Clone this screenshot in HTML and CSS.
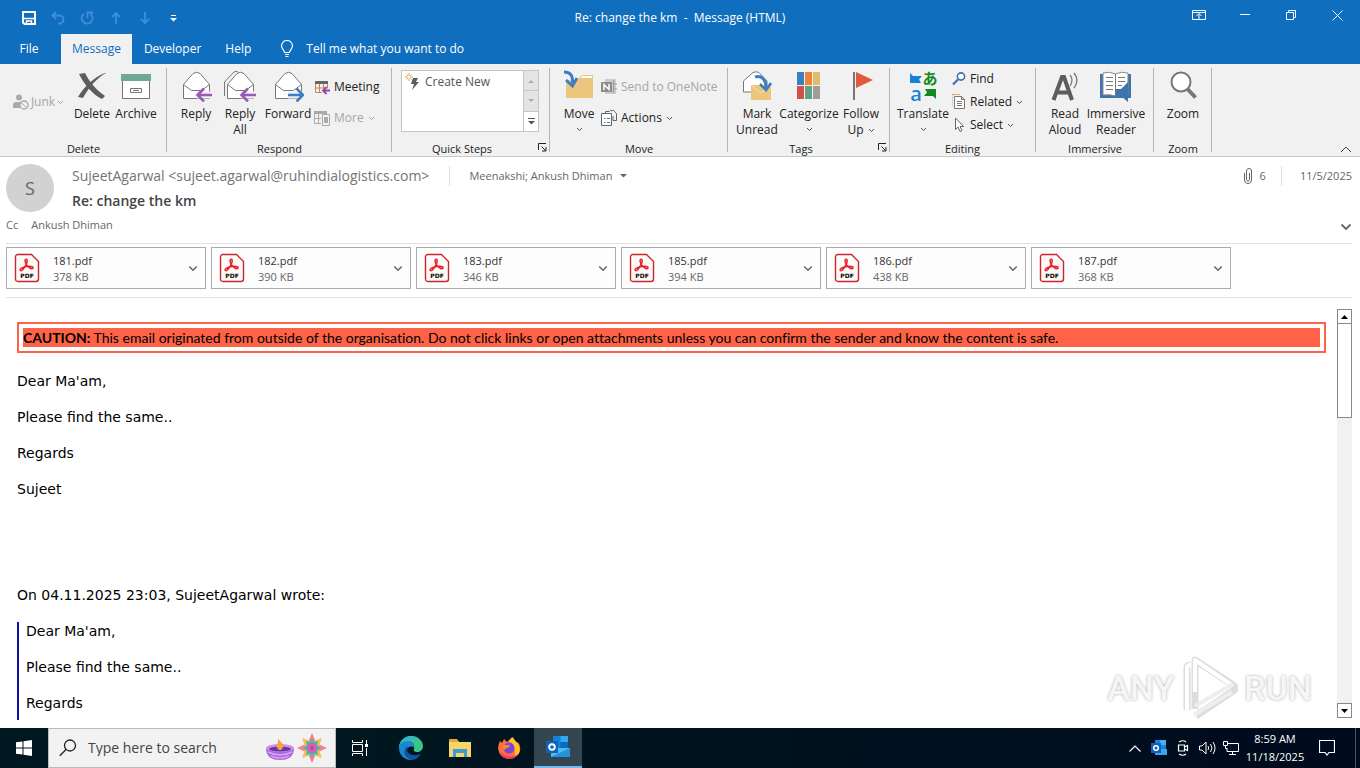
FILE: index.html
```html
<!DOCTYPE html>
<html lang="en">
<head>
    <meta charset="UTF-8">
    <meta name="viewport" content="width=device-width, initial-scale=1.0">
    <title>Re: change the km - Message (HTML)</title>
    <link rel="stylesheet" href="styles.css">
</head>
<body>

    <!-- Shared icons -->
    <svg class="sprite" aria-hidden="true">
        <symbol id="chev" viewBox="0 0 7 5"><path d="M1 1l2.500 2.500L6 1" fill="none" stroke="currentColor"/></symbol>
        <symbol id="chev-big" viewBox="0 0 12 8"><path d="M1.500 1.500L6 6l4.500-4.500" fill="none" stroke="currentColor" stroke-width="1.800"/></symbol>
        <symbol id="launcher" viewBox="0 0 9 9"><path d="M.5 7V.5H8M3.500 3.500l4 4M8 4v4H4" fill="none" stroke="currentColor"/></symbol>
        <symbol id="envelope" viewBox="0 0 32 32">
            <path d="M3.500 14.500L13 3.500q3.500-2.500 7 0l9.500 11v14h-26z" fill="#fff" stroke="#777"/>
            <path d="M3.500 14.500l8 6h10l8-6" fill="none" stroke="#777"/>
        </symbol>
        <symbol id="pdf" viewBox="0 0 26 30">
            <path d="M4 1.500h13.500l7 7V26q0 2.500-2.500 2.500H4q-2.500 0-2.500-2.500V4q0-2.500 2.500-2.500z" fill="#fffaf7" stroke="#c9252d" stroke-width="1.400"/>
            <path d="M6.500 17.500c-1.500-1 1-3 5-3.800s8-.4 7.500 1.300-4.500 0-6.500-3.200-1.800-5.500-.3-5.500 1.300 3.200-.9 6.700-4 5.300-4.800 4.500z" fill="none" stroke="#e8202a" stroke-width="1.500"/>
        </symbol>
    </svg>

    <header class="titlebar">
        <div class="quick-access">
            <button aria-label="Save"><svg width="14" height="14" viewBox="0 0 14 14"><path d="M1 1h12v12H2.500L1 11.500z" fill="none" stroke="#fff" stroke-width="2"/><path d="M1 7.500h12M4.500 13V10h5v3" fill="none" stroke="#fff" stroke-width="1.500"/></svg></button>
            <button class="off" aria-label="Undo"><svg width="14" height="14" viewBox="0 0 14 14"><path d="M5 1L1.500 4.500 5 8M2 4.500h6.500a4 4 0 0 1 0 8H7" fill="none" stroke="currentColor" stroke-width="1.800"/></svg></button>
            <button class="off" aria-label="Redo"><svg width="14" height="14" viewBox="0 0 14 14"><path d="M4 2.500a5.500 5.500 0 1 0 6.500.2M7.500 7V1.500H13" fill="none" stroke="currentColor" stroke-width="1.800"/></svg></button>
            <button class="off" aria-label="Previous item"><svg width="12" height="14" viewBox="0 0 12 14"><path d="M6 13V2M2 6l4-4 4 4" fill="none" stroke="currentColor" stroke-width="1.800"/></svg></button>
            <button class="off" aria-label="Next item"><svg width="12" height="14" viewBox="0 0 12 14"><path d="M6 1v11M2 8l4 4 4-4" fill="none" stroke="currentColor" stroke-width="1.800"/></svg></button>
            <button aria-label="Customize toolbar"><svg width="7" height="7" viewBox="0 0 7 7"><path d="M1 .5h5" stroke="#fff"/><path d="M0 3h7L3.500 6.500z" fill="#fff"/></svg></button>
        </div>
        <div class="window-title">Re: change the km &nbsp;-&nbsp; Message (HTML)</div>
        <div class="window-buttons">
            <button aria-label="Ribbon display options"><svg width="14" height="12" viewBox="0 0 14 12"><path d="M.5 1.500h13v9H.5zM.5 3.500h13M7 10V5M4.500 7L7 4.500 9.500 7" fill="none" stroke="#fff"/></svg></button>
            <button aria-label="Minimize"><svg width="10" height="10" viewBox="0 0 10 10"><path d="M0 4.500h10" stroke="#fff"/></svg></button>
            <button aria-label="Restore"><svg width="10" height="10" viewBox="0 0 10 10"><path d="M.5 2.500h7v7h-7zM2.500 2V.5h7v7H8" fill="none" stroke="#fff"/></svg></button>
            <button aria-label="Close"><svg width="11" height="11" viewBox="0 0 11 11"><path d="M.5.5l10 10M10.500.5l-10 10" stroke="#fff"/></svg></button>
        </div>
    </header>

    <nav class="tabs">
        <button class="file-tab">File</button>
        <button class="active">Message</button>
        <button>Developer</button>
        <button>Help</button>
        <label class="tell-me">
            <svg width="14" height="18" viewBox="0 0 14 18"><path d="M4.500 12.500c0-2.500-3-3.500-3-6.500a5.500 5.500 0 0 1 11 0c0 3-3 4-3 6.500zM5 14.500h4M5.500 16.500h3" fill="none" stroke="#fff" stroke-width="1.200"/></svg>
            <input type="text" placeholder="Tell me what you want to do" aria-label="Tell me what you want to do">
        </label>
    </nav>

    <section class="ribbon">
        <div class="group g-delete">
            <div class="tools">
                <button class="small off junk">
                    <svg width="16" height="16" viewBox="0 0 16 16"><circle cx="6" cy="3.500" r="3" fill="#aaa"/><path d="M0 14V11q0-3 3-3h5v6z" fill="#aaa"/><circle cx="11" cy="11" r="4" fill="#f1f1f1" stroke="#aaa" stroke-width="1.300"/><path d="M8 8.500l6 5.500" stroke="#aaa"/></svg>
                    Junk <svg class="chev"><use href="#chev"/></svg>
                </button>
                <button class="big">
                    <svg width="32" height="32" viewBox="0 0 32 32"><path d="M3 4l6-1c4 8 11 17 20 23l-3 3C16 24 8 14 3 4z" fill="#5d5d5d"/><path d="M30 3C21 8 13 17 7 28l-5-1C8 17 18 7 29 3z" fill="#5d5d5d"/></svg>
                    Delete
                </button>
                <button class="big">
                    <svg width="32" height="32" viewBox="0 0 32 32"><path d="M2.500 10h27v18.500h-27z" fill="#fff" stroke="#777"/><path d="M1 4h30v7H1z" fill="#6fa897"/><path d="M10.500 18.500h11v4h-11zM13 20.500h6" fill="none" stroke="#777"/></svg>
                    Archive
                </button>
            </div>
            <div class="group-name">Delete</div>
        </div>

        <div class="group g-respond">
            <div class="tools">
                <button class="big">
                    <svg width="32" height="32" viewBox="0 0 32 32"><use href="#envelope"/><path d="M17 25h15" stroke="#f1f1f1" stroke-width="7"/><path d="M32 25H18M24 18.500L17.500 25l6.500 6.500" fill="none" stroke="#9b59b6" stroke-width="2.600"/></svg>
                    Reply
                </button>
                <button class="big">
                    <svg width="32" height="32" viewBox="0 0 32 32"><path d="M.5 26V12L10 2q2-1.500 4 0" fill="none" stroke="#777"/><use href="#envelope"/><path d="M17 25h15" stroke="#f1f1f1" stroke-width="7"/><path d="M32 25H18M24 18.500L17.500 25l6.500 6.500" fill="none" stroke="#9b59b6" stroke-width="2.600"/></svg>
                    Reply All
                </button>
                <button class="big forward">
                    <svg width="32" height="32" viewBox="0 0 32 32"><use href="#envelope"/><path d="M16 25h16" stroke="#f1f1f1" stroke-width="7"/><path d="M16 25h14M24.500 18.500L31 25l-6.500 6.500" fill="none" stroke="#3b7ec4" stroke-width="2.600"/></svg>
                    Forward
                </button>
                <div class="stack">
                    <button class="small">
                        <svg width="16" height="16" viewBox="0 0 16 16"><path d="M1 2h13v3H1z" fill="#666"/><path d="M1.500 5v8.500H8M5.500 5v8M9.500 5v4M1.500 9h12V5" fill="none" stroke="#c98448"/><path d="M16 11.500H9.500M12.500 8L9 11.500l3.500 3.500" fill="none" stroke="#8e44ad" stroke-width="1.800"/></svg>
                        Meeting
                    </button>
                    <button class="small off">
                        <svg width="16" height="16" viewBox="0 0 16 16"><path d="M0 1h13v3H0z" fill="#aaa"/><path d="M.5 4v9.500H7M4.500 4v9M.5 8.500H7M8.500 4.500h7v11h-7z" fill="none" stroke="#aaa"/><path d="M10 7h4v6h-4z" fill="#aaa"/></svg>
                        More <svg class="chev"><use href="#chev"/></svg>
                    </button>
                </div>
            </div>
            <div class="group-name">Respond</div>
        </div>

        <div class="group g-steps">
            <div class="tools">
                <div class="gallery">
                    <button class="step">
                        <svg width="16" height="18" viewBox="0 0 16 18"><path d="M4 0v8M0 4h8M1.500 1.500l5 5M6.500 1.500l-5 5" stroke="#e0a34a"/><circle cx="4" cy="4" r="1.500" fill="#fff"/><path d="M8 5h5l-2 4h3l-7 8 2-6H6z" fill="#5d5d5d"/></svg>
                        Create New
                    </button>
                    <div class="gallery-scroll">
                        <button class="dim" aria-label="Scroll up"><svg width="6" height="4" viewBox="0 0 6 4"><path d="M0 4l3-3 3 3z" fill="#aaa"/></svg></button>
                        <button class="dim" aria-label="Scroll down"><svg width="6" height="4" viewBox="0 0 6 4"><path d="M0 0l3 3 3-3z" fill="#aaa"/></svg></button>
                        <button aria-label="More steps"><svg width="7" height="7" viewBox="0 0 7 7"><path d="M0 .5h7" stroke="#555"/><path d="M0 3h7L3.500 6.500z" fill="#555"/></svg></button>
                    </div>
                </div>
            </div>
            <div class="group-name with-launcher">Quick Steps</div>
            <button class="launcher" aria-label="Manage quick steps"><svg width="9" height="9"><use href="#launcher"/></svg></button>
        </div>

        <div class="group g-move">
            <div class="tools">
                <button class="big">
                    <svg width="32" height="32" viewBox="0 0 32 32"><path d="M3 28V10h11l5-5h11v23z" fill="#ecc67c"/><path d="M19 6h10v2H18z" fill="#fff"/><path d="M1 2c6 0 9 3 8.500 11" fill="none" stroke="#3b7ec4" stroke-width="3"/><path d="M3 10l6.500 6L14 8" fill="none" stroke="#3b7ec4" stroke-width="2.800"/></svg>
                    Move <svg class="chev"><use href="#chev"/></svg>
                </button>
                <div class="stack">
                    <button class="small off">
                        <svg width="16" height="16" viewBox="0 0 16 16"><path d="M4 0h11v15H4z" fill="#ccc"/><path d="M12.500 1v13M13 5h3M13 10h3" stroke="#999"/><path d="M0 3h11v10H0z" fill="#8c8c8c"/><path d="M3 11V5.500l5 5V5" fill="none" stroke="#fff" stroke-width="1.500"/></svg>
                        Send to OneNote
                    </button>
                    <button class="small">
                        <svg width="16" height="16" viewBox="0 0 16 16"><path d="M.5 3.500h10v12H.5z" fill="#fff" stroke="#666"/><path d="M3 8.500h1.500M6 8.500h3M3 12.500h1.500M6 12.500h3" stroke="#3b7ec4"/><path d="M4.500 3V1.500h4l1-1h3l3 3v7H12V6" fill="none" stroke="#666"/></svg>
                        Actions <svg class="chev"><use href="#chev"/></svg>
                    </button>
                </div>
            </div>
            <div class="group-name">Move</div>
        </div>

        <div class="group g-tags">
            <div class="tools">
                <button class="big">
                    <svg width="32" height="32" viewBox="0 0 32 32"><path d="M2.500 22V11L12 2.500q3-1.500 6 0L26 11v11z" fill="#fff" stroke="#777"/><path d="M10 15h20v15H10z" fill="#ecc67c"/><path d="M10 15l10 8 10-8" fill="none" stroke="#f7e3b8"/><path d="M14 7c7-2 11 3 11 11" fill="none" stroke="#3b7ec4" stroke-width="3"/><path d="M19 14l6 6 5-7" fill="none" stroke="#3b7ec4" stroke-width="2.600"/></svg>
                    Mark Unread
                </button>
                <button class="big categorize">
                    <svg width="32" height="32" viewBox="0 0 32 32"><path d="M4 2h7v13H4z" fill="#3b7ec4"/><path d="M12 2h7v13h-7z" fill="#ee8536"/><path d="M20 2h7v13h-7z" fill="#dfbd6d"/><path d="M4 16h7v13H4z" fill="#d2504a"/><path d="M12 16h7v13h-7z" fill="#5fa287"/><path d="M20 16h7v13h-7z" fill="#a09c98"/></svg>
                    Categorize <svg class="chev"><use href="#chev"/></svg>
                </button>
                <button class="big">
                    <svg width="32" height="32" viewBox="0 0 32 32"><path d="M9 2v28" stroke="#777" stroke-width="2"/><path d="M11 2l17 8-17 8z" fill="#e05a3c"/></svg>
                    Follow<span class="second-line">Up <svg class="chev"><use href="#chev"/></svg></span>
                </button>
            </div>
            <div class="group-name with-launcher">Tags</div>
            <button class="launcher" aria-label="Message options"><svg width="9" height="9"><use href="#launcher"/></svg></button>
        </div>

        <div class="group g-editing">
            <div class="tools">
                <button class="big translate">
                    <span class="translate-icon">
                        <svg width="14" height="12" viewBox="0 0 14 12"><path d="M1 1l3 3h9l-3 3.500 2 3.500H1z" fill="#1683d8"/></svg>
                        <span class="kana">あ</span>
                        <span class="latin">a</span>
                        <svg width="14" height="12" viewBox="0 0 14 12"><path d="M13 11l-3-3H1l3-3.500L2 1h11z" fill="#128a20"/></svg>
                    </span>
                    Translate <svg class="chev"><use href="#chev"/></svg>
                </button>
                <div class="stack three">
                    <button class="small">
                        <svg width="14" height="14" viewBox="0 0 14 14"><circle cx="9" cy="4.500" r="3.600" fill="#fff" stroke="#3c6fb0" stroke-width="1.600"/><path d="M6 7.500L1 12.500" stroke="#3c6fb0" stroke-width="2.200"/></svg>
                        Find
                    </button>
                    <button class="small">
                        <svg width="14" height="16" viewBox="0 0 14 16"><path d="M0 12V.5h8" fill="none" stroke="#e3a868"/><path d="M2.500 2.500h7l3 3v9h-10zM9.500 2.500v3h3M5 7.500h5M5 9.500h5M5 11.500h5" fill="#fff" stroke="#777"/></svg>
                        Related <svg class="chev"><use href="#chev"/></svg>
                    </button>
                    <button class="small">
                        <svg width="14" height="16" viewBox="0 0 14 16"><path d="M3.500 1v11.500L6 10l2 4.500 2-1L8 9.500h3.500z" fill="#fff" stroke="#666"/></svg>
                        Select <svg class="chev"><use href="#chev"/></svg>
                    </button>
                </div>
            </div>
            <div class="group-name">Editing</div>
        </div>

        <div class="group g-immersive">
            <div class="tools">
                <button class="big">
                    <svg width="32" height="32" viewBox="0 0 32 32"><path d="M4.500 30L13 7h2l8 23M8 22.500h12" fill="none" stroke="#5d5d5d" stroke-width="4"/><path d="M21 5q4 5 0 11M25 3q6 7 0 15" fill="none" stroke="#777" stroke-width="1.300"/></svg>
                    Read Aloud
                </button>
                <button class="big immersive">
                    <svg width="32" height="32" viewBox="0 0 32 32"><path d="M0 4h31v24H0z" fill="#3c74ad"/><path d="M3 3q7-2 12.500 1Q21 1 28 3v22q-7-1-12.500 1Q10 24 3 25z" fill="#fff" stroke="#8a8a8a"/><path d="M15.500 4v22M6 7.500h7M6 11.500h7M6 15.500h7M6 19.500h7M18 7.500h7M18 11.500h7M18 15.500h4" stroke="#777"/><path d="M16 19h5l7-7v20l-7-6h-5z" fill="#3c74ad"/><path d="M29 18q2.500 4 0 8" fill="none" stroke="#3c74ad" stroke-width="1.500"/></svg>
                    Immersive Reader
                </button>
            </div>
            <div class="group-name">Immersive</div>
        </div>

        <div class="group g-zoom">
            <div class="tools">
                <button class="big">
                    <svg width="32" height="32" viewBox="0 0 32 32"><circle cx="14" cy="12" r="9.500" fill="#fff" stroke="#777" stroke-width="2"/><path d="M20.500 19l8 8.500" stroke="#777" stroke-width="4"/></svg>
                    Zoom
                </button>
            </div>
            <div class="group-name">Zoom</div>
        </div>

        <button class="collapse" aria-label="Collapse the ribbon"><svg width="12" height="7" viewBox="0 0 12 7"><path d="M1 6l5-5 5 5" fill="none" stroke="#444"/></svg></button>
    </section>

    <main class="message">
        <section class="message-head">
            <div class="avatar">S</div>
            <div class="head-lines">
                <div class="from-line">
                    <span class="sender">SujeetAgarwal &lt;sujeet.agarwal@ruhindialogistics.com&gt;</span>
                    <span class="recipients">Meenakshi; Ankush Dhiman <svg width="7" height="4" viewBox="0 0 7 4"><path d="M0 0h7L3.500 3.500z" fill="#666"/></svg></span>
                    <span class="clip-count"><svg width="8" height="16" viewBox="0 0 8 16"><path d="M5.500 5v6.500a1.500 1.500 0 0 1-3 0V3a2 2 0 0 1 5 0v9a3.400 3.400 0 0 1-7 0V5" fill="none" stroke="#666"/></svg> 6</span>
                    <span class="date">11/5/2025</span>
                </div>
                <h1>Re: change the km</h1>
            </div>
        </section>
        <div class="cc-line">
            <span>Cc</span><span>Ankush Dhiman</span>
            <button aria-label="Expand header"><svg width="12" height="8"><use href="#chev-big"/></svg></button>
        </div>

        <div class="attachments">
            <div class="attachment"><div class="pdf-icon"><svg width="26" height="30"><use href="#pdf"/></svg><span>PDF</span></div><div class="file"><b>181.pdf</b><br>378 KB</div><button aria-label="181.pdf options"><svg width="10" height="7"><use href="#chev-big"/></svg></button></div>
            <div class="attachment"><div class="pdf-icon"><svg width="26" height="30"><use href="#pdf"/></svg><span>PDF</span></div><div class="file"><b>182.pdf</b><br>390 KB</div><button aria-label="182.pdf options"><svg width="10" height="7"><use href="#chev-big"/></svg></button></div>
            <div class="attachment"><div class="pdf-icon"><svg width="26" height="30"><use href="#pdf"/></svg><span>PDF</span></div><div class="file"><b>183.pdf</b><br>346 KB</div><button aria-label="183.pdf options"><svg width="10" height="7"><use href="#chev-big"/></svg></button></div>
            <div class="attachment"><div class="pdf-icon"><svg width="26" height="30"><use href="#pdf"/></svg><span>PDF</span></div><div class="file"><b>185.pdf</b><br>394 KB</div><button aria-label="185.pdf options"><svg width="10" height="7"><use href="#chev-big"/></svg></button></div>
            <div class="attachment"><div class="pdf-icon"><svg width="26" height="30"><use href="#pdf"/></svg><span>PDF</span></div><div class="file"><b>186.pdf</b><br>438 KB</div><button aria-label="186.pdf options"><svg width="10" height="7"><use href="#chev-big"/></svg></button></div>
            <div class="attachment"><div class="pdf-icon"><svg width="26" height="30"><use href="#pdf"/></svg><span>PDF</span></div><div class="file"><b>187.pdf</b><br>368 KB</div><button aria-label="187.pdf options"><svg width="10" height="7"><use href="#chev-big"/></svg></button></div>
        </div>

        <div class="reading">
            <article class="mail">
                <div class="caution"><p><strong>CAUTION:</strong> This email originated from outside of the organisation. Do not click links or open attachments unless you can confirm the sender and know the content is safe.</p></div>
                <p>Dear Ma'am,</p>
                <p>Please find the same..</p>
                <p>Regards</p>
                <p>Sujeet</p>
                <p class="wrote">On 04.11.2025 23:03, SujeetAgarwal wrote:</p>
                <blockquote>
                    <p>Dear Ma'am,</p>
                    <p>Please find the same..</p>
                    <p>Regards</p>
                </blockquote>
            </article>
            <div class="scrollbar">
                <button aria-label="Scroll message up"><svg width="7" height="4" viewBox="0 0 7 4"><path d="M0 4l3.500-4L7 4z"/></svg></button>
                <div class="thumb"></div>
                <button aria-label="Scroll message down"><svg width="7" height="4" viewBox="0 0 7 4"><path d="M0 0l3.500 4L7 0z"/></svg></button>
            </div>
        </div>

        <div class="watermark">
            <span>ANY</span>
            <svg width="58" height="64" viewBox="0 0 58 64">
                <path d="M7 54V12q0-3 3-3M15 53V4l38 25q4 3 0 6L16 60" fill="none" stroke="#ddd" stroke-width="7" stroke-linejoin="round"/>
                <path d="M7 54V12q0-3 3-3M15 36V4l38 26" fill="none" stroke="#fff" stroke-width="4" stroke-linejoin="round"/>
                <path d="M15 50l38-22M14 59l38-23" fill="none" stroke="#eee" stroke-width="4"/>
            </svg>
            <span>RUN</span>
        </div>
    </main>

    <footer class="taskbar">
        <button class="start" aria-label="Start"><svg width="16" height="16" viewBox="0 0 16 16"><path d="M0 2.300L6.500 1.400v6.100H0zM7.500 1.200L16 0v7.500H7.500zM0 8.500h6.500v6.100L0 13.700zM7.500 8.500H16V16l-8.500-1.200z" fill="#fff"/></svg></button>
        <label class="search">
            <svg width="18" height="18" viewBox="0 0 18 18"><circle cx="11" cy="6.500" r="5.500" fill="none" stroke="#222" stroke-width="1.300"/><path d="M7 10.500L.8 16.800" stroke="#222" stroke-width="1.300"/></svg>
            <input type="text" placeholder="Type here to search" aria-label="Type here to search">
            <svg width="62" height="32" viewBox="0 0 62 32">
                <path d="M1 16q14-5 28 0c0 9-6 12-14 12S1 25 1 16z" fill="#a866dd"/>
                <ellipse cx="15" cy="16" rx="14" ry="4" fill="#c993ec"/><ellipse cx="15" cy="17" rx="11" ry="2.500" fill="#6d35aa"/>
                <path d="M3 20q12 6 24 0M6 24q9 4 18 0" fill="none" stroke="#d6a6f2" stroke-width="1.500"/>
                <path d="M14 18c-5-4 0-6-1-11 5 4 7 8 3 11z" fill="#f6a53a"/>
                <g fill="#ef8290"><path id="petal" d="M47 1l5 11H42z"/><use href="#petal" transform="rotate(90 47 16)"/><use href="#petal" transform="rotate(180 47 16)"/><use href="#petal" transform="rotate(270 47 16)"/></g>
                <g fill="#f5bd58"><path id="petal2" d="M47 2l5 10H42z" transform="rotate(45 47 16)"/><path d="M47 2l5 10H42z" transform="rotate(135 47 16)"/><path d="M47 2l5 10H42z" transform="rotate(225 47 16)"/><path d="M47 2l5 10H42z" transform="rotate(315 47 16)"/></g>
                <path d="M47 7l2 3 4-1-1 4 3 3-3 3 1 4-4-1-2 3-2-3-4 1 1-4-3-3 3-3-1-4 4 1z" fill="#38b6b8"/>
                <circle cx="47" cy="16" r="5" fill="#e95aab"/><circle cx="47" cy="16" r="2" fill="#8854c0"/>
            </svg>
        </label>
        <button class="app" aria-label="Task view"><svg width="16" height="16" viewBox="0 0 16 16"><path d="M.5 0v2.500h10V0M.5 4.500h10v7H.5zM.5 16v-2.500h10V16M14.500 0v4M14.500 8v8" fill="none" stroke="#fff"/><path d="M13 4h3v3h-3z" fill="#fff"/></svg></button>
        <div class="apps">
            <button class="app" aria-label="Edge"><svg width="24" height="24" viewBox="0 0 24 24"><path d="M0 11C1 4 6 0 12 0c7 0 12 5 12 10 0 4-3 6-6 6-2 0-4-1-3-3 1-3-2-5-5-5-5 0-9 2-10 3z" fill="#3cc58a"/><path d="M0 11C1 4 6 0 12 0c3 0 6 1 8 3-5-1-12 0-14 5z" fill="#35b5c9"/><path d="M0 12c0-5 5-7 9-7 5 0 7 3 6 6-5-2-9 2-7 7 1 3 3 5 6 6C6 25 0 19 0 12z" fill="#1b86d2"/><path d="M9 10c-3 5 1 12 13 8-3 5-8 7-12 5-6-3-6-11-1-13z" fill="#12549c"/></svg></button>
            <button class="app" aria-label="File Explorer"><svg width="22" height="20" viewBox="0 0 22 20"><path d="M0 2h8l2 2h12v15H0z" fill="#f8d568"/><path d="M0 2q0-1 1-1h7l2 3H0z" fill="#e8a33a"/><path d="M4 19v-8h14v8h-3v-4H7v4z" fill="#3d9bd8"/></svg></button>
            <button class="app" aria-label="Firefox"><svg width="24" height="24" viewBox="0 0 24 24"><path d="M3 5l2 2 2-4 3 3 5-5c1 3 3 4 5 6l1-1c6 9-1 17-9 17S-2 15 3 5z" fill="#ff7139"/><path d="M12 5l4-4c1 3 3 4 5 7 4 7 0 12-4 13 3-6 0-12-5-16z" fill="#ffc62c"/><path d="M2 14c2 10 14 12 19 4-6 4-14 4-19-4z" fill="#f4316c"/><circle cx="12" cy="12" r="5.500" fill="#7b45d8"/><path d="M6 9h6c2 1 0 3-2 3-1 0-2 1-2 2-2-1-3-3-2-5z" fill="#ff8a30"/></svg></button>
            <button class="app active" aria-label="Outlook"><svg width="24" height="22" viewBox="0 0 24 22"><path d="M7 0h15v12H7z" fill="#1681d8"/><path d="M14.500 0H22v6h-7.500z" fill="#33aaf0"/><path d="M14.500 6H22v6h-7.500z" fill="#1069bd"/><path d="M5 12h19v9H5z" fill="#4dbcee"/><path d="M5 21l19-9v9z" fill="#2391dc"/><path d="M0 5h12v12H0z" fill="#0f63b8"/><circle cx="6" cy="11" r="2.800" fill="none" stroke="#fff" stroke-width="1.900"/></svg></button>
        </div>
        <div class="tray">
            <button aria-label="Show hidden icons"><svg width="12" height="7" viewBox="0 0 12 7"><path d="M.5 6.500L6 1l5.500 5.500" fill="none" stroke="#fff" stroke-width="1.200"/></svg></button>
            <button aria-label="Outlook notifications"><svg width="16" height="16" viewBox="0 0 16 16"><path d="M4 0h11v9H4z" fill="#1b84d8"/><path d="M9 0h6v5H9z" fill="#43b3f3"/><path d="M4 9h12v6H4z" fill="#38a6e6"/><path d="M0 3h10v10H0z" fill="#0c62b8"/><circle cx="5" cy="8" r="2.300" fill="none" stroke="#fff" stroke-width="1.500"/></svg></button>
            <button aria-label="Meet now"><svg width="14" height="16" viewBox="0 0 14 16"><path d="M2.500 5h6v6h-6zM8.500 7l3-1.500v5l-3-1.500M3 2q4-2.500 7 0M3 14q4 2.500 7 0" fill="none" stroke="#fff" stroke-width="1.200"/></svg></button>
            <button aria-label="Volume"><svg width="17" height="14" viewBox="0 0 17 14"><path d="M.5 5H3l4-4v12L3 9H.5zM9 5q1.500 2 0 4M11.500 3q3 4 0 8M14 1q4 6 0 12" fill="none" stroke="#fff"/></svg></button>
            <button aria-label="Network"><svg width="16" height="15" viewBox="0 0 16 15"><path d="M5 2.500h10.500v8H4V7M9.500 10.500v3M6 13.500h7M.5.5h4v4h-4zM2.500 4.500v3H4" fill="none" stroke="#fff"/></svg></button>
            <div class="clock">8:59 AM<br>11/18/2025</div>
            <button class="notify" aria-label="Notifications"><svg width="16" height="16" viewBox="0 0 16 16"><path d="M.5.5h15v12H10L8 15l-2-2.500H.5z" fill="none" stroke="#fff" stroke-width="1.200"/></svg></button>
        </div>
    </footer>

</body>
</html>
```
FILE: styles.css
```css
* {
    box-sizing: border-box;
}

body {
    margin: 0;
    height: 100vh;
    display: flex;
    flex-direction: column;
    overflow: hidden;
    font-family: "Open Sans", "Noto Sans", sans-serif;
    font-size: 12px;
    line-height: 16px;
    color: #222;
    background: #fff;
}

button {
    margin: 0;
    padding: 0;
    border: 0;
    background: none;
    font: inherit;
    color: inherit;
    display: flex;
    align-items: center;
    justify-content: center;
}

input {
    border: 0;
    padding: 0;
    background: none;
    font: inherit;
    outline: none;
}

svg {
    flex: none;
}

.sprite {
    position: absolute;
    width: 0;
    height: 0;
}

.chev {
    width: 7px;
    height: 5px;
    color: #555;
}

/* Title bar */
.titlebar {
    height: 34px;
    display: grid;
    grid-template-columns: 1fr auto 1fr;
    background: #106ebe;
    color: #fff;
}

.quick-access {
    display: flex;
    padding-left: 14px;
}

.quick-access button {
    width: 29px;
}

.quick-access .off {
    color: #3f8fd6;
}

.window-title {
    line-height: 36px;
}

.window-buttons {
    display: flex;
    justify-content: flex-end;
    height: 30px;
}

.window-buttons button {
    width: 46px;
}

.tabs {
    height: 30px;
    display: flex;
    background: #106ebe;
    color: #fff;
}

.tabs button {
    padding: 0 12px;
}

.tabs .file-tab {
    width: 58px;
    margin-right: 3px;
}

.tabs .active {
    padding: 0 11px;
    background: #f1f1f1;
    color: #106ebe;
}

.tell-me {
    flex: 1;
    display: flex;
    align-items: center;
    gap: 12px;
    padding-left: 17px;
}

.tell-me input {
    flex: 1;
    color: #fff;
}

.tell-me input::placeholder {
    color: #fff;
    opacity: 1;
}

/* Ribbon */
.ribbon {
    height: 93px;
    display: flex;
    padding-top: 4px;
    background: #f1f1f1;
    border-bottom: 1px solid #c8c8c8;
}

.group {
    position: relative;
    height: 84px;
    padding: 0 6px 0 7px;
    border-right: 1px solid #b5b5b5;
}

.g-delete { width: 167px; }
.g-respond { width: 225px; }
.g-steps { width: 158px; padding: 0 10px 0 9px; }
.g-move { width: 178px; }
.g-tags { width: 162px; }
.g-editing { width: 146px; padding: 0 4px; }
.g-immersive { width: 118px; }
.g-zoom { width: 58px; }

.tools {
    display: flex;
    height: 72px;
}

.group-name {
    font-size: 11px;
    line-height: 17px;
    text-align: center;
}

.with-launcher {
    padding-right: 16px;
}

.big {
    width: 44px;
    flex: none;
    flex-direction: column;
    justify-content: flex-start;
    padding-top: 2px;
}

.big > :first-child {
    margin-bottom: 4px;
}

.big > .chev {
    margin-top: 5px;
}

.second-line {
    display: flex;
    align-items: center;
    gap: 4px;
}

.forward { width: 52px; }
.categorize { width: 60px; }
.translate { width: 58px; }
.immersive { width: 58px; }

.small {
    gap: 4px;
    height: 20px;
    white-space: nowrap;
}

.small.off,
.small.off .chev {
    color: #a6a6a6;
}

.junk {
    width: 63px;
    gap: 2px;
    margin-top: 24px;
}

.stack {
    display: flex;
    flex-direction: column;
    align-items: flex-start;
    gap: 11px;
    padding-top: 9px;
}

.stack.three {
    gap: 3px;
    padding-top: 1px;
}

.gallery {
    flex: 1;
    display: flex;
    height: 62px;
    margin-top: 2px;
    background: #fff;
    border: 1px solid #c6c6c6;
}

.step {
    flex: 1;
    height: 22px;
    justify-content: flex-start;
    gap: 4px;
    padding-left: 3px;
    color: #555;
}

.gallery-scroll {
    width: 15px;
    display: flex;
    flex-direction: column;
    border-left: 1px solid #c6c6c6;
}

.gallery-scroll button {
    flex: 1;
}

.gallery-scroll .dim {
    background: #e4e4e4;
    border-bottom: 1px solid #c6c6c6;
}

.launcher {
    position: absolute;
    right: 2px;
    bottom: 0;
}

.translate-icon {
    width: 28px;
    height: 32px;
    display: grid;
    grid-template-columns: 14px 14px;
    grid-template-rows: 16px 16px;
    place-items: center;
}

.latin {
    font-size: 20px;
    font-weight: 600;
    color: #1683d8;
}

.kana {
    font-family: "Noto Sans CJK JP", sans-serif;
    font-size: 15px;
    font-weight: bold;
    color: #128a20;
}

.collapse {
    margin: auto 8px 0 auto;
    height: 14px;
}

/* Message header */
.message {
    position: relative;
    flex: 1;
    min-height: 0;
    display: flex;
    flex-direction: column;
    padding: 0 8px 0 6px;
    color: #666;
}

.message-head {
    display: flex;
    gap: 18px;
    padding-top: 7px;
}

.avatar {
    width: 48px;
    height: 48px;
    border-radius: 50%;
    background: #d2d2d2;
    font-size: 18px;
    line-height: 48px;
    text-align: center;
}

.head-lines {
    flex: 1;
}

.from-line {
    display: flex;
    align-items: center;
    height: 24px;
    font-size: 11px;
}

.sender {
    font-size: 14px;
    color: #757575;
}

.recipients {
    display: flex;
    align-items: center;
    gap: 8px;
    margin-left: 20px;
    padding-left: 19px;
    border-left: 1px solid #ddd;
    line-height: 20px;
}

.clip-count {
    display: flex;
    gap: 8px;
    margin-left: auto;
    padding-right: 15px;
}

.date {
    padding-left: 18px;
    border-left: 1px solid #ddd;
    line-height: 20px;
}

.message-head h1 {
    margin: 3px 0 0;
    font-size: 14px;
    line-height: 20px;
    font-weight: 600;
    color: #444;
}

.cc-line {
    display: flex;
    gap: 13px;
    height: 31px;
    padding-top: 5px;
    font-size: 11px;
}

.cc-line button {
    margin-left: auto;
    height: 20px;
}

/* Attachments */
.attachments {
    display: flex;
    gap: 5px;
    height: 55px;
    padding-top: 3px;
    border: solid #e1e1e1;
    border-width: 1px 0;
}

.attachment {
    width: 200px;
    height: 42px;
    display: flex;
    align-items: center;
    gap: 13px;
    padding: 0 7px;
    border: 1px solid #ababab;
    background: #fdfdfd;
    font-size: 11px;
}

.pdf-icon {
    position: relative;
    height: 30px;
}

.pdf-icon span {
    position: absolute;
    left: 0;
    right: 0;
    bottom: 3px;
    font: bold 6px/8px "DejaVu Sans", sans-serif;
    text-align: center;
    color: #000;
}

.file {
    padding-top: 1px;
}

.attachment b {
    font-weight: 400;
    color: #333;
}

.attachment button {
    margin-left: auto;
}

/* Mail body */
.reading {
    flex: 1;
    min-height: 0;
    display: flex;
    gap: 11px;
    margin-bottom: 8px;
}

.mail {
    flex: 1;
    overflow: hidden;
    padding: 24px 0 0 11px;
    font-family: "DejaVu Sans", sans-serif;
    font-size: 14px;
    color: #000;
}

.mail p {
    margin: 0 0 20px;
}

.caution {
    margin-bottom: 20px;
    padding: 4px;
    border: 2px solid #ff6347;
    font: 14px/19px Lato, sans-serif;
    font-variant-ligatures: none;
}

.mail .caution p {
    margin: 0;
    background: #ff6347;
}

.mail .wrote {
    margin: 90px 0 19px;
}

.mail blockquote {
    margin: 0;
    padding: 1px 0 0 7px;
    border-left: 2px solid #1010a0;
}

.mail blockquote p:last-child {
    margin: 0;
    padding-bottom: 9px;
}

.scrollbar {
    width: 15px;
    display: flex;
    flex-direction: column;
    margin: 11px 0 2px;
    background: #f1f1f1;
}

.scrollbar button {
    height: 15px;
    background: #fff;
    border: 1px solid #888;
}

.thumb {
    height: 94px;
    margin-bottom: auto;
    background: #fff;
    border: 1px solid #888;
    border-top: 0;
}

.watermark {
    position: absolute;
    right: 48px;
    bottom: 8px;
    display: flex;
    align-items: center;
    gap: 6px;
    font: 500 34px/64px Roboto, sans-serif;
    color: #f6f6f6;
    text-shadow: 0 0 3px #aaa;
}

/* Taskbar */
.taskbar {
    height: 40px;
    display: flex;
    background: linear-gradient(90deg, #001820 20%, #000c1d 90%);
    color: #fff;
}

.start {
    width: 48px;
}

.search {
    width: 288px;
    display: flex;
    align-items: center;
    gap: 11px;
    padding: 0 8px 0 10px;
    background: #f2f2f2;
    border: 1px solid #bbb;
    font-size: 14px;
}

.search input {
    flex: 1;
    min-width: 0;
}

.search input::placeholder {
    color: #444;
    opacity: 1;
}

.app {
    width: 48px;
}

.apps {
    display: flex;
    gap: 1px;
    margin-left: 3px;
}

.apps .active {
    background: #33454f;
    border-bottom: 2px solid #76b9ed;
}

.tray {
    display: flex;
    margin-left: auto;
    padding-right: 4px;
}

.tray button {
    width: 24px;
}

.clock {
    width: 64px;
    padding-top: 2px;
    font-size: 11px;
    line-height: 18px;
    text-align: center;
}

.tray .notify {
    width: 49px;
    padding-right: 8px;
    border-right: 1px solid #4a5560;
}
```
